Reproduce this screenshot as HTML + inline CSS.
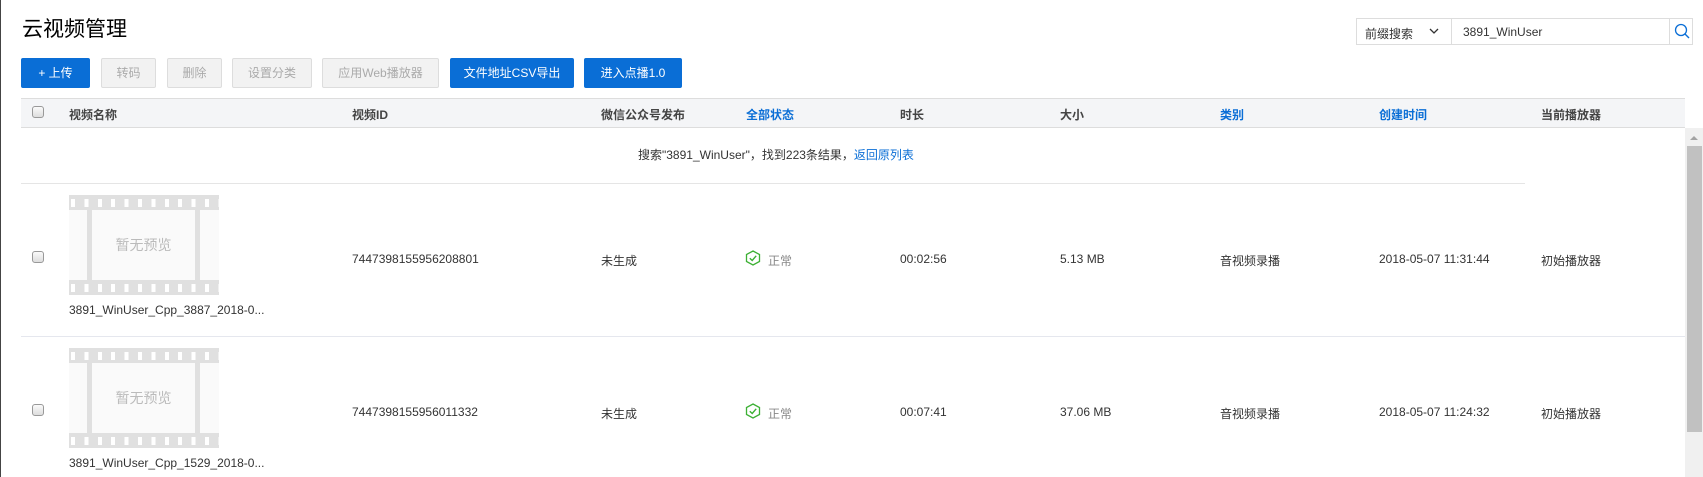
<!DOCTYPE html>
<html><head><meta charset="utf-8"><style>
*{margin:0;padding:0;box-sizing:border-box}
body{width:1703px;height:477px;overflow:hidden;background:#fff;font-family:"Liberation Sans","Noto Sans CJK SC",sans-serif;font-size:12px;color:#333;position:relative;border-left:1px solid #444}
.a{position:absolute;white-space:nowrap}
.btn{position:absolute;top:58px;height:30px;line-height:28px;text-align:center;border-radius:2px;font-size:12px}
.p{background:#0a6ed6;color:#fff;border:1px solid #0a6ed6}
.d{background:#f2f2f2;color:#aaa;border:1px solid #ddd}
.cb{position:absolute;width:12px;height:12px;border:1px solid #999;border-radius:3px;background:linear-gradient(#fafafa,#ddd)}
.h{font-weight:bold;color:#444;top:106px}
.blue,.h.blue{color:#0a6ed6}
.film{position:absolute;width:150px;height:100px;background:#e0e0e0}
.film .in{position:absolute;left:23px;top:15px;width:103px;height:70px;background:#fafafa;color:#bbb;font-size:14px;text-align:center;line-height:70px}
.film .l,.film .r{position:absolute;top:15px;height:70px;background:#fafafa}
.film .l{left:0;width:18px}.film .r{left:131px;width:19px}
.holes{position:absolute;left:2px;height:8px;width:148px;background:repeating-linear-gradient(90deg,#fff 0 4px,transparent 4px 13.4px)}
</style></head><body>
<div class="a" style="left:21px;top:13px;font-size:21px;color:#000">云视频管理</div>

<div class="btn p" style="left:20px;width:69px">+ 上传</div>
<div class="btn d" style="left:100px;width:55px">转码</div>
<div class="btn d" style="left:166px;width:55px">删除</div>
<div class="btn d" style="left:231px;width:80px">设置分类</div>
<div class="btn d" style="left:321px;width:117px">应用Web播放器</div>
<div class="btn p" style="left:449px;width:124px">文件地址CSV导出</div>
<div class="btn p" style="left:583px;width:98px">进入点播1.0</div>

<div class="a" style="left:1355px;top:18px;width:337px;height:27px;border:1px solid #ddd;background:#fff"></div>
<div class="a" style="left:1364px;top:25px;font-size:12px;color:#333">前缀搜索</div>
<svg class="a" style="left:1428px;top:28px" width="10" height="7"><path d="M1 1L5 5L9 1" stroke="#333" stroke-width="1.3" fill="none"/></svg>
<div class="a" style="left:1450px;top:18px;width:1px;height:27px;background:#ddd"></div>
<div class="a" style="left:1462px;top:25px;font-size:12px;color:#333">3891_WinUser</div>
<div class="a" style="left:1668px;top:18px;width:1px;height:27px;background:#ddd"></div>
<svg class="a" style="left:1672px;top:22px" width="18" height="18"><circle cx="8" cy="8" r="5.5" stroke="#0a6ed6" stroke-width="1.3" fill="none"/><path d="M12 12L16 16" stroke="#0a6ed6" stroke-width="1.4"/></svg>

<div class="a" style="left:20px;top:98px;width:1664px;height:30px;background:#f4f5f7;border-top:1px solid #ddd;border-bottom:1px solid #ddd"></div>
<div class="cb" style="left:31px;top:106px"></div>
<div class="a h" style="left:68px">视频名称</div>
<div class="a h" style="left:351px">视频ID</div>
<div class="a h" style="left:600px">微信公众号发布</div>
<div class="a h blue" style="left:745px">全部状态</div>
<div class="a h" style="left:899px">时长</div>
<div class="a h" style="left:1059px">大小</div>
<div class="a h blue" style="left:1219px">类别</div>
<div class="a h blue" style="left:1378px">创建时间</div>
<div class="a h" style="left:1540px">当前播放器</div>

<div class="a" style="left:637px;top:146px">搜索"3891_WinUser"，找到223条结果，<span class="blue">返回原列表</span></div>
<div class="a" style="left:20px;top:183px;width:1504px;height:1px;background:#e5e5e5"></div>
<div class="a" style="left:20px;top:336px;width:1664px;height:1px;background:#e5e7ee"></div>

<!-- row 1 -->
<div class="cb" style="left:31px;top:251px"></div>
<div class="film" style="left:68px;top:195px"><div class="holes" style="top:4px"></div><div class="holes" style="top:89px"></div><div class="l"></div><div class="in">暂无预览</div><div class="r"></div></div>
<div class="a" style="left:68px;top:303px">3891_WinUser_Cpp_3887_2018-0...</div>
<div class="a" style="left:351px;top:252px">7447398155956208801</div>
<div class="a" style="left:600px;top:252px">未生成</div>
<svg class="a" style="left:744px;top:250px" width="16" height="16"><path d="M8 1L14.5 4.5V11.5L8 15L1.5 11.5V4.5Z" stroke="#3cb034" stroke-width="1.3" fill="none"/><path d="M4.8 8.2L7.2 10.5L11.2 5.8" stroke="#3cb034" stroke-width="1.4" fill="none"/></svg>
<div class="a" style="left:767px;top:252px;color:#888">正常</div>
<div class="a" style="left:899px;top:252px">00:02:56</div>
<div class="a" style="left:1059px;top:252px">5.13 MB</div>
<div class="a" style="left:1219px;top:252px">音视频录播</div>
<div class="a" style="left:1378px;top:252px">2018-05-07 11:31:44</div>
<div class="a" style="left:1540px;top:252px">初始播放器</div>

<!-- row 2 -->
<div class="cb" style="left:31px;top:404px"></div>
<div class="film" style="left:68px;top:348px"><div class="holes" style="top:4px"></div><div class="holes" style="top:89px"></div><div class="l"></div><div class="in">暂无预览</div><div class="r"></div></div>
<div class="a" style="left:68px;top:456px">3891_WinUser_Cpp_1529_2018-0...</div>
<div class="a" style="left:351px;top:405px">7447398155956011332</div>
<div class="a" style="left:600px;top:405px">未生成</div>
<svg class="a" style="left:744px;top:403px" width="16" height="16"><path d="M8 1L14.5 4.5V11.5L8 15L1.5 11.5V4.5Z" stroke="#3cb034" stroke-width="1.3" fill="none"/><path d="M4.8 8.2L7.2 10.5L11.2 5.8" stroke="#3cb034" stroke-width="1.4" fill="none"/></svg>
<div class="a" style="left:767px;top:405px;color:#888">正常</div>
<div class="a" style="left:899px;top:405px">00:07:41</div>
<div class="a" style="left:1059px;top:405px">37.06 MB</div>
<div class="a" style="left:1219px;top:405px">音视频录播</div>
<div class="a" style="left:1378px;top:405px">2018-05-07 11:24:32</div>
<div class="a" style="left:1540px;top:405px">初始播放器</div>

<!-- scrollbar -->
<div class="a" style="left:1684px;top:128px;width:19px;height:349px;background:#f0f0f0"></div>
<svg class="a" style="left:1688px;top:134px" width="10" height="8"><path d="M1 6L5 2L9 6Z" fill="#a3a3a3"/></svg>
<div class="a" style="left:1686px;top:146px;width:15px;height:286px;background:#c1c1c1"></div>
</body></html>
